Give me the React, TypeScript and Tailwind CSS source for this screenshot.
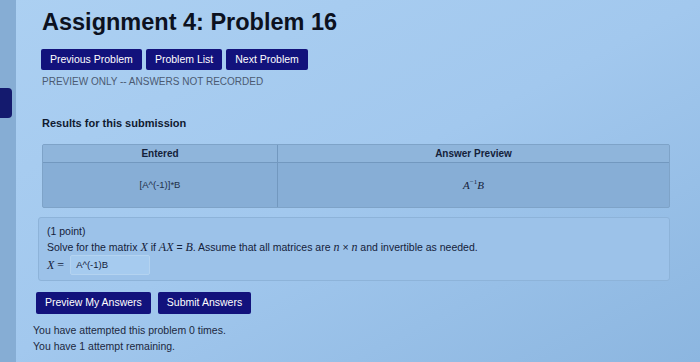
export default function App() {
  return (
    <div className="flex h-[362px] w-[700px] overflow-hidden bg-linear-to-br from-[#acd0f2] via-[#a2c8ee] to-[#8cb6e0] font-['Liberation_Sans',Arial,sans-serif] text-[#14213a]">
      {/* left edge strip */}
      <div className="flex w-[16px] shrink-0 flex-col bg-[#86add4]">
        <div className="h-[88px]" />
        <div className="h-[30px] w-[12px] rounded-r-[4px] bg-[#141a6e]" />
      </div>

      <div className="flex w-[640px] flex-col pl-[26px] pt-[5px]">
        <h1 className="text-[23.5px] font-bold leading-[34px] text-[#0c1120]">
          Assignment 4: Problem 16
        </h1>

        <div className="-ml-[1px] mt-[10px] flex gap-[4px]">
          <button className="h-[21px] rounded-[2px] bg-[#12127c] px-[9px] text-[10.5px] text-white">Previous Problem</button>
          <button className="h-[21px] rounded-[2px] bg-[#12127c] px-[9px] text-[10.5px] text-white">Problem List</button>
          <button className="h-[21px] rounded-[2px] bg-[#12127c] px-[9px] text-[10.5px] text-white">Next Problem</button>
        </div>

        <p className="mt-[6px] text-[10px] leading-[12px] text-[#4b5a72]">PREVIEW ONLY -- ANSWERS NOT RECORDED</p>

        <p className="mt-[28px] text-[11px] font-bold leading-[14px] text-[#101a30]">Results for this submission</p>

        <div className="mt-[14px] w-[628px] overflow-hidden rounded-[2px] border border-[#7ea3c8] bg-[#87aed6]">
          <div className="grid grid-cols-[235px_1fr] text-[10px] font-bold">
            <div className="flex h-[18px] items-center justify-center border-r border-b border-[#7298bf] bg-[#8fb5db]">Entered</div>
            <div className="flex h-[18px] items-center justify-center border-b border-[#7298bf] bg-[#8fb5db]">Answer Preview</div>
            <div className="flex h-[44px] items-center justify-center border-r border-[#7298bf] text-[9.5px] font-normal text-[#22304a]">[A^(-1)]*B</div>
            <div className="flex h-[44px] items-center justify-center font-['Liberation_Serif',serif] text-[11px] font-normal italic">
              A<sup className="text-[7px] not-italic">−1</sup>B
            </div>
          </div>
        </div>

        <div className="-ml-[4px] mt-[9px] w-[632px] rounded-[3px] border border-[#8db3d9] bg-[#9cc2e9] px-[8px] pb-[5px] pt-[5px] text-[10.5px] leading-[16px] text-[#14213a]">
          <p>(1 point)</p>
          <p>
            Solve for the matrix <i className="font-['Liberation_Serif',serif] text-[12px]">X</i> if{' '}
            <i className="font-['Liberation_Serif',serif] text-[12px]">AX</i> ={' '}
            <i className="font-['Liberation_Serif',serif] text-[12px]">B</i>. Assume that all matrices are{' '}
            <i className="font-['Liberation_Serif',serif] text-[12px]">n</i> × <i className="font-['Liberation_Serif',serif] text-[12px]">n</i> and invertible as needed.
          </p>
          <div className="flex items-center gap-[6px]">
            <span className="font-['Liberation_Serif',serif] text-[12px]">
              <i>X</i> =
            </span>
            <div className="flex h-[20px] w-[80px] items-center rounded-[2px] border border-[#b4d3f0] bg-[#a6cbef] px-[5px] text-[9.5px]">
              A^(-1)B
            </div>
          </div>
        </div>

        <div className="-ml-[6px] mt-[11px] flex gap-[7px]">
          <button className="h-[22px] rounded-[2px] bg-[#12127c] px-[9px] text-[10.5px] text-white">Preview My Answers</button>
          <button className="h-[22px] rounded-[2px] bg-[#12127c] px-[9px] text-[10.5px] text-white">Submit Answers</button>
        </div>

        <div className="-ml-[9px] mt-[8px] text-[10.5px] leading-[16px] text-[#1c2840]">
          <p>You have attempted this problem 0 times.</p>
          <p>You have 1 attempt remaining.</p>
        </div>
      </div>
    </div>
  )
}
